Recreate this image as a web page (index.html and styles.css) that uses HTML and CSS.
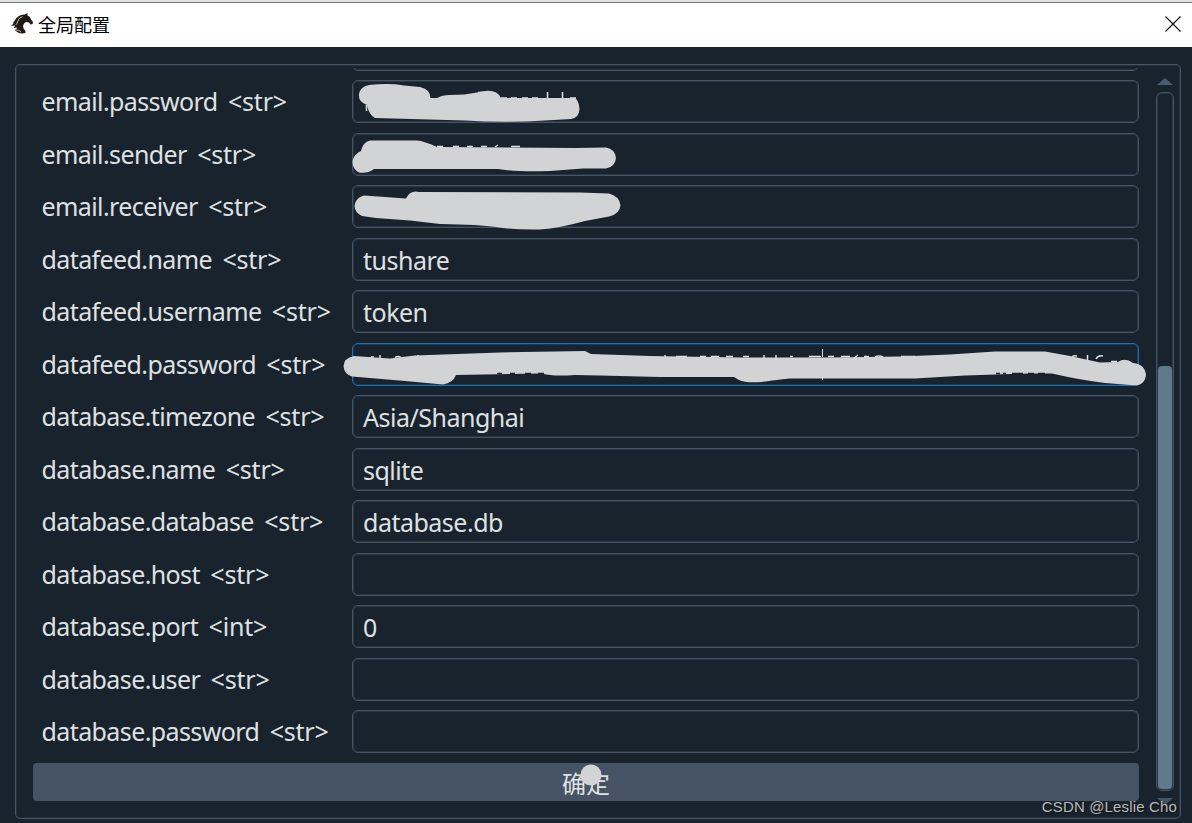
FILE: index.html
```html
<!DOCTYPE html>
<html lang="zh-CN">
<head>
  <meta charset="UTF-8">
  <title>全局配置</title>
  <link rel="stylesheet" href="styles.css">
</head>
<body>

  <div class="titlebar">
    <svg class="logo" width="24" height="22" viewBox="0 0 24 22">
      <path d="M0 13 Q3 12 4 9.500 L2.500 9.500 Q5 8.500 6 5.500 Q8 3 11 2 L15 1.500 L17.500 0 L17.500 2.500 L20 4 L21 6.500 L23 9 L22.500 11 L20.500 11.500 L19 9.500 L16 9 Q13.500 10 13 13 Q13 15.500 15.500 18 L15.500 20 Q11 21 8 19.500 L4.500 17 Q7 16.500 7 14.500 L3.500 15 Q5 13.500 5 12.500 Z" fill="#231815"/>
      <path d="M12.500 3.500 Q8 5 7.500 9 Q7 11 5.500 12 M5.500 17 Q9 16.500 11 19" fill="none" stroke="#fff" stroke-width=".7"/>
    </svg>
    <span class="title">全局配置</span>
    <svg class="close" width="16" height="16" viewBox="0 0 16 16">
      <path d="M.5 .5 L15.5 15.5 M15.5 .5 L.5 15.5" stroke="#000" stroke-width="1.1"/>
    </svg>
  </div>

  <div class="frame">
    <div class="content">
      <div class="form">
        <label></label><div class="field"></div>
        <label>email.password <span>&lt;str&gt;</span></label><div class="field"></div>
        <label>email.sender <span>&lt;str&gt;</span></label><div class="field"></div>
        <label>email.receiver <span>&lt;str&gt;</span></label><div class="field"></div>
        <label>datafeed.name <span>&lt;str&gt;</span></label><div class="field">tushare</div>
        <label>datafeed.username <span>&lt;str&gt;</span></label><div class="field">token</div>
        <label>datafeed.password <span>&lt;str&gt;</span></label><div class="field focus"></div>
        <label>database.timezone <span>&lt;str&gt;</span></label><div class="field">Asia/Shanghai</div>
        <label>database.name <span>&lt;str&gt;</span></label><div class="field">sqlite</div>
        <label>database.database <span>&lt;str&gt;</span></label><div class="field">database.db</div>
        <label>database.host <span>&lt;str&gt;</span></label><div class="field"></div>
        <label>database.port <span>&lt;int&gt;</span></label><div class="field">0</div>
        <label>database.user <span>&lt;str&gt;</span></label><div class="field"></div>
        <label>database.password <span>&lt;str&gt;</span></label><div class="field"></div>
      </div>
      <div class="ok-btn">确定</div>
    </div>

    <div class="scrollbar">
      <div class="arrow up"></div>
      <div class="track"><div class="thumb"></div></div>
      <div class="arrow down"></div>
    </div>
  </div>

  <!-- brush strokes over the private values -->
  <svg class="brush" width="1192" height="823" viewBox="0 0 1192 823">
    <path class="bits" d="M366.5 105v6 M547.5 92v7 M562.5 92v7 M501 98h6 M511 98h6 M522 98h6 M532 98h6 M570 98h6 M478 92.500h4"/>
    <path class="bits" d="M437 146.500h6 M453 146.500h6 M467 146.500h6 M481 146.500h6 M495 147l3 -2 M511 146.500h9"/>
    <path class="bits" d="M371 357h3 M380 355v4 M395 357.500q3 -2 6 0 M418 355v3 M665 355v4 M676 356.500h11 M700 356.500h6 M711 356.500h8 M726 356.500h7 M743 356.500h6 M764 355v3 M776 355v3 M790 356.500h3 M809 356.500h12 M828 356.500h6 M841 356.500h9 M854 358l4 -3 M864 356.500h5 M875 357q4 -2 8 0 M901 356.500h14 M1072 357q1 -2 5 -1 M1087.500 355v7 M1096 359q2 -4 7 -3 M1111 361.500h6"/>
    <path d="M369 85 Q389 83 404 85.500 L420 87 Q430 89 430.500 98 L437 98 Q442 95 450 95 Q465 95 477 92.500 Q496 87 501 98 L575 98 Q579 101 579.500 109 Q579 118 571 119 L545 120.500 Q505 123 465 120.500 L375 118 Q369 115 367 105 Q358 102 359 94 Q360 87 369 85 Z"/>
    <path d="M370 140.500 L417 140.500 Q424 141 437 147 L575 148 L606 147.500 Q615 149 616 158 Q615 167 606 168.500 L583 168.500 L550 171 Q515 172 498 169 L374 169 Q367 174 359 172.500 Q352 169 352.500 161 Q354 154 361 151 Q363 142 370 140.500 Z"/>
    <path d="M364 195.500 L406 198.500 Q410 190 419 192 L580 192.500 L609 193.500 Q619 196 620.500 205 Q620 214 609 216.500 L585 221 Q560 228 540 229.500 Q513 230 496 227 Q480 224.500 440 224 L410 220.500 L376 218 L362 216 Q355 213 354.500 206 Q355 198 364 195.500 Z"/>
    <path d="M354 356 L390 358.500 L415 355.500 L500 352.500 L585 351 L591 354 L650 356 L740 357.500 L830 357.500 L900 356.500 L950 354.500 L995 351.500 L1045 351.500 L1070 356 L1100 362.500 L1118 362 Q1125 357 1133 363 Q1145 364 1146 375 Q1145 384 1137 385.500 L1105 383 Q1080 380 1052 373.500 L1030 373.500 L965 375.500 L915 378.500 L790 378.500 Q774 380 769 381 Q748 384 739 380 L734 377 L660 377 L600 375.500 L575 375 Q560 376 550 375 L540 373.500 L456 375 Q453 383 443 384.500 L405 381 L352 376.500 Q344 374 343.500 366 Q344 358 354 356 Z"/>
    <path class="gaps" d="M497 373.500h5 M510 373.500h5 M525 373.500h6 M538 373.500h6 M996 373.500h4 M1003 373.500h3 M1012 373.500h11 M1028 373.500h6 M1038 373.500h7"/>
    <path class="caret" d="M822.500 349v8 M822.500 378v2"/>
    <circle cx="591" cy="775" r="10.500"/>
  </svg>

  <div class="watermark">CSDN @Leslie Cho</div>

</body>
</html>
```
FILE: styles.css
```css
* {
  box-sizing: border-box;
}

body {
  margin: 0;
  height: 823px;
  position: relative;
  overflow: hidden;
  background-color: #19232d;
  color: #dfe1e2;
  font-family: 'Noto Sans', 'Noto Sans CJK SC', sans-serif;
}

.titlebar {
  height: 47px;
  padding: 0 11px 2px 10px;
  display: flex;
  align-items: center;
  background-color: #fff;
  border-top: 2px solid #e1e1e1;
  box-shadow: inset 0 1px 0 #777;
  color: #000;
}

.title {
  margin-left: 4px;
  font-family: 'Noto Sans CJK SC', sans-serif;
  font-size: 18px;
  line-height: 24px;
}

.close {
  margin-left: auto;
}

.frame {
  height: 755px;
  margin: 17px 11px 0 15px;
  padding: 3px 6px 0 17px;
  display: flex;
  justify-content: space-between;
  border: 1px solid #455364;
  border-radius: 5px;
  box-shadow: inset 0 0 0 1px rgba(69, 83, 100, 0.3);
}

.content {
  width: 1106px;
  height: 740px;
  overflow: hidden;
}

.form {
  display: grid;
  grid-template-columns: 310px 787px;
  grid-auto-rows: 43px;
  row-gap: 9.5px;
  margin: -40.5px 0 0 9px;
  font-size: 25px;
}

label {
  margin-left: -0.5px;
  line-height: 43px;
  letter-spacing: -0.6px;
  word-spacing: 4.5px;
  white-space: nowrap;
}

label span {
  letter-spacing: -0.2px;
}

.field {
  padding-left: 10px;
  border: 1px solid #455364;
  border-radius: 6px;
  box-shadow: inset 0 0 0 1px rgba(69, 83, 100, 0.4);
  line-height: 42px;
  letter-spacing: -0.5px;
}

.field.focus {
  border-color: #1a72bb;
  box-shadow: inset 0 0 0 1px rgba(26, 114, 187, 0.3);
}

.ok-btn {
  height: 38px;
  margin-top: 9.5px;
  border-radius: 4px;
  background-color: #455364;
  font-family: 'Noto Sans CJK SC', sans-serif;
  font-size: 24px;
  line-height: 40px;
  text-align: center;
}

.scrollbar {
  width: 18px;
  padding-top: 10px;
  display: flex;
  flex-direction: column;
  align-items: center;
}

.arrow {
  border-left: 8px solid transparent;
  border-right: 8px solid transparent;
}

.arrow.up {
  border-bottom: 7px solid #4c5c6e;
}

.arrow.down {
  margin-top: 7px;
  border-top: 7px solid #455364;
}

.track {
  width: 18px;
  height: 699px;
  margin-top: 7px;
  padding: 273px 1px 1px;
  border: 1px solid #455364;
  border-radius: 6px;
  box-shadow: inset 0 0 0 1px rgba(69, 83, 100, 0.4);
}

.thumb {
  height: 100%;
  border-radius: 4px;
  background-color: #60798b;
}

.brush {
  position: absolute;
  left: 0;
  top: 0;
  fill: #d2d3d5;
}

.bits,
.gaps,
.caret {
  fill: none;
  stroke: #dfe1e2;
  stroke-width: 1.5;
}

.gaps {
  stroke: #19232d;
}

.caret {
  stroke-width: 1;
}

.watermark {
  position: absolute;
  right: 15px;
  bottom: 7px;
  font-family: 'Liberation Sans', sans-serif;
  font-size: 15px;
  line-height: 19px;
  letter-spacing: 0.15px;
  color: #b8bbbe;
  text-shadow: 1px 1px 1px #111;
}
```
